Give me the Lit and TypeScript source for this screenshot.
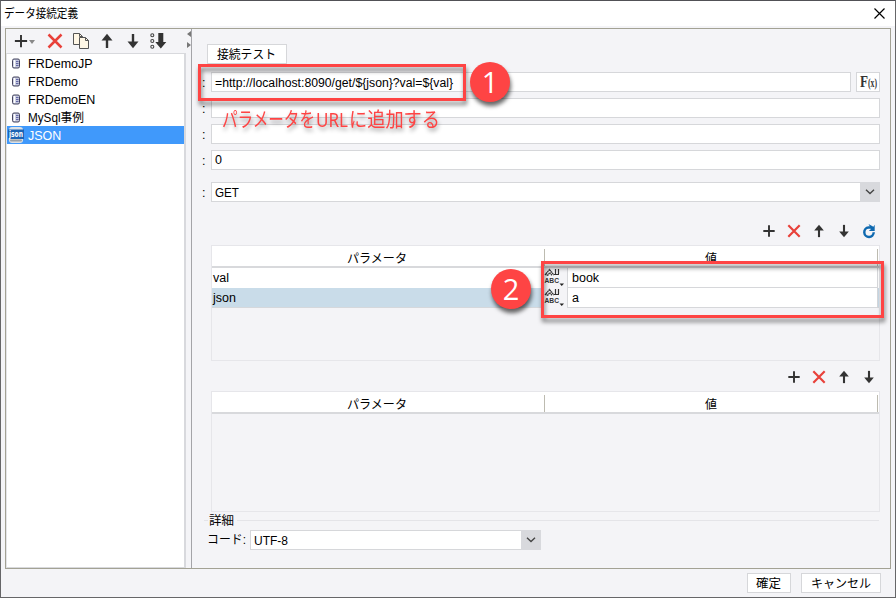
import { LitElement, html, svg, css } from "lit";
import { customElement } from "lit/decorators.js";

// Single-line text set to an exact advance width.
const label = (text: string, width: number, cls = "") => html`
  <svg class="label ${cls}" width=${width} height="18">
    <text x="0" y="13.5" textLength=${width} lengthAdjust="spacingAndGlyphs">${text}</text>
  </svg>`;

const glyphs: Record<string, unknown> = {
  add: svg`<path d="M8 1.500v13M1.500 8h13" stroke="#333" stroke-width="2.200" fill="none"/>`,
  addBig: svg`<path d="M8 1v14M1 8h14" stroke="#333" stroke-width="2.2" fill="none"/>`,
  del: svg`<path d="M1.500 1.500L14.500 14.500M14.500 1.500L1.500 14.500" stroke="#e8413a" stroke-width="2.5" fill="none"/>`,
  up: svg`<path d="M8 15V5" stroke="#333" stroke-width="2.4" fill="none"/><path d="M8 .8L13.500 7.500H2.500Z" fill="#333"/>`,
  down: svg`<path d="M8 1V11" stroke="#333" stroke-width="2.4" fill="none"/><path d="M8 15.200L13.500 8.500H2.500Z" fill="#333"/>`,
  refresh: svg`<path d="M10.500 4H7.500A5.400 5.400 0 1 0 13.400 9.500" stroke="#0f69b0" stroke-width="2.8" fill="none"/><path d="M7.500 0L13 3.200L14.500 .8V8H7.800L10.300 5.600Z" fill="#0f69b0"/>`,
  copy: svg`<g fill="#fff7e6" stroke="#555" stroke-width="1"><path d="M.5 .5H6.5L9.5 3.5V11.5H.5Z"/><path d="M6.500 4.500H12.500L15.500 7.500V15.500H6.500Z"/><path d="M12.500 4.500V7.500H15.500M6.500 .5V3.500H9.500" fill="none"/></g>`,
  sort: svg`<g fill="none" stroke="#444" stroke-width="1.1"><circle cx="2.300" cy="2.300" r="1.500"/><circle cx="2.300" cy="8" r="1.500"/><circle cx="2.300" cy="13.700" r="1.500"/></g><path d="M8.300 0h5v9h3L10.800 15.500L5.300 9h3Z" fill="#333"/>`,
};
const icon = (name: string, size = 16) =>
  html`<svg class="icon" width=${size} height=${size} viewBox="0 0 16 16">${glyphs[name]}</svg>`;

const chevron = html`<span class="chev"><svg width="10" height="6" viewBox="0 0 10 6">
  <path d="M1 .8L5 4.500L9 .8" fill="none" stroke="#444" stroke-width="1.400"/></svg></span>`;

const database = html`<svg class="db" width="10" height="11" viewBox="0 0 10 11">
  <rect x="1.500" y="1" width="7" height="9" rx="1.500" fill="#c3c7dd" stroke="#45455e" stroke-width="1"/>
  <path d="M3.500 2V9" stroke="#fff" stroke-width="1.500"/>
  <path d="M5 3.500H7.500M5 5.500H7.500M5 7.500H7.500" stroke="#5b5fa0" stroke-width=".9"/></svg>`;

const jsonIcon = html`<svg class="json" width="16" height="16" viewBox="0 0 16 16">
  <rect x="1" y="0" width="14" height="16" rx="3" fill="#dde1e5"/>
  <rect x="2" y="12.500" width="12" height="2" rx="1" fill="#9ba1a7"/>
  <rect x="0" y="2.500" width="16" height="9.500" fill="#1d64b5"/>
  <text x="1" y="9.500" textLength="14" lengthAdjust="spacingAndGlyphs">json</text></svg>`;

const typeIcon = html`<svg class="type" width="24" height="20" viewBox="0 0 24 20">
  <path d="M1 7L5.500 1.500L10 7M3.500 7.500L5.800 4.500L8 7.500M1.500 5.500L3.500 7.500" fill="none" stroke="#333" stroke-width="1.300" stroke-dasharray="1.500 .4"/>
  <path d="M11.500 1V6M14.500 1V6M10 6.500H15" fill="none" stroke="#333" stroke-width="1.200"/>
  <text x="0.500" y="15" textLength="14.500" lengthAdjust="spacingAndGlyphs">ABC</text>
  <path d="M15.500 15.500H20L17.750 18Z" fill="#222"/><path d="M23.500 0V20" stroke="#d6d7da"/></svg>`;

@customElement("app-root")
export class AppRoot extends LitElement {
  static styles = css`
    :host { display: block; position: relative; width: 896px; height: 598px; overflow: hidden;
      font: 12.500px/18px "Liberation Sans", "Noto Sans CJK JP", sans-serif; color: #000; }
    * { box-sizing: border-box; }
    svg { display: block; flex: none; overflow: visible; }
    .label text { font: 12.500px "Liberation Sans", "Noto Sans CJK JP", sans-serif; fill: currentColor; }
    .window { height: 598px; border: 1px solid #666668; border-top-color: #515156; background: #f4f4f7; }
    .title { height: 25px; background: #fff; display: flex; justify-content: space-between; padding: 3px 10px 0 3px; }
    .close { margin-top: 4px; }
    .panel { margin: 2px 4px 0; height: 541px; border: 1px solid #a3a294; display: flex; }
    .side { width: 185px; padding: 0 6px 0 0; }
    .bar { height: 24px; display: flex; align-items: center; }
    .side .bar { padding-left: 8px; }
    .tri { margin: 2px 12px 0 1px; }
    .g1, .g2, .g3 { margin-right: 10px; } .g4 { margin-right: 9px; }
    .list { width: 180px; height: 515px; border: solid #d8d9dd; border-width: 1px 2px 1px 1px; border-left-color: #e4e4e8; background: #fff; }
    .item { height: 18px; display: flex; align-items: center; padding-left: 4px; }
    .name { padding-top: 2px; line-height: 18px; }
    .item.sel { background: #4099fb; color: #fff; padding-left: 1px; }
    .db { margin-right: 7px; } .json { margin-right: 4px; }
    .json text { font: bold 8.500px "DejaVu Sans", sans-serif; fill: #fff; }
    .split { width: 1px; background: #a4a4a8; }
    .arrows { width: 4px; padding-top: 2px; margin-left: -4px; }
    .main { flex: 1; padding: 15px 10px 0 12px; }
    .btn { height: 20px; border: 1px solid #d6d7da; background: #fff; display: flex; align-items: center; justify-content: center; }
    .test { width: 80px; margin-left: 3px; padding-right: 2px; }
    .field { display: flex; height: 20px; margin-top: 6px; }
    .field.first { margin-top: 8px; } .field.method { margin-top: 12px; }
    .colon { width: 7px; line-height: 22px; text-indent: -2px; }
    .box { flex: 1; min-width: 0; height: 20px; border: 1px solid #d6d7da; background: #fff; padding-left: 3px; display: flex; align-items: center; justify-content: space-between; line-height: 20px; }
    .fx { width: 24px; margin-left: 5px; }
    .fx text { font: bold 16px "Liberation Serif", serif; fill: #333; }
    .fx .small { font-size: 12px; }
    .chev { width: 20px; height: 20px; background: #d8d9dd; display: flex; align-items: center; justify-content: center; margin-right: -1px; }
    .tools { display: flex; justify-content: flex-end; gap: 11px; padding-right: 4px; }
    .tools.one { margin-top: 22px; } .tools.two { margin-top: 9px; }
    .table { margin: 7px 0 0 7px; border: 1px solid #e6e6ea; }
    .one-t { height: 116px; } .two-t { height: 121px; }
    .head { height: 22px; background: #fff; border-bottom: 2px solid #d8d9dc; display: flex; padding-top: 3px; }
    .th { height: 17px; border-right: 1px solid #bdbbb0; display: flex; justify-content: center; padding-right: 2px; }
    .th.v { padding-right: 0; }
    .k { width: 333px; } .v { flex: 1; margin-right: 1px; }
    .row { display: flex; height: 20px; background: #fff; }
    .row.sel { background: #c9dce9; border-bottom: 1px solid #d5d8dc; }
    .key { width: 332px; line-height: 20px; padding-left: 1px; }
    .type { background: #f4f4f7; }
    .type text { font: bold 8px "Liberation Sans", sans-serif; fill: #333; }
    .cell { flex: 1; height: 20px; border: solid #d6d7da; border-width: 0 1px 1px 0; background: #fff; padding-left: 4px; line-height: 20px; margin-right: 1px; }
    .group { display: flex; height: 18px; align-items: center; margin: -1px 1px 0 0; }
    .ln { height: 1px; background: #e4e4e8; }
    .ln.a { width: 4px; margin-right: 1px; } .ln.b { flex: 1; margin-left: 3px; }
    .code { display: flex; height: 20px; margin: 1px 0 0 3px; }
    .code .box { flex: none; width: 291px; margin-left: 4px; }
    .foot { display: flex; justify-content: flex-end; gap: 10px; padding: 4px 14px 0 0; }
    .ok { width: 44px; padding-right: 1px; } .cancel { width: 80px; padding-right: 1px; }
    .mark { position: absolute; border: 3px solid #fe4444; filter: drop-shadow(1px 4px 2px rgba(0,0,0,.5)); }
    .m1 { left: 198px; top: 64px; width: 268px; height: 37px; }
    .m2 { left: 541px; top: 261px; width: 343px; height: 57px; }
    .dot { position: absolute; width: 40px; height: 40px; border-radius: 50%; background: #fe4444; color: #fff; font: 29px/40px "Open Sans", "Noto Sans", sans-serif; text-align: center; box-shadow: 1px 4px 4px rgba(0,0,0,.6); }
    .d1 { left: 470px; top: 62px; } .d2 { left: 491px; top: 269px; }
    .note { position: absolute; left: 222px; top: 107px; filter: drop-shadow(1px 3px 2px rgba(0,0,0,.4)); }
    .note text { font: 400 20px "Noto Sans", "Noto Sans CJK JP", sans-serif; fill: #fe4444; }
  `;

  private header() {
    return html`<div class="head"><div class="th k">${label("パラメータ", 60)}</div><div class="th v">${label("値", 12)}</div></div>`;
  }

  render() {
    return html`
      <div class="window">
        <div class="title">${label("データ接続定義", 74)}
          <svg class="close" width="11" height="11"><path d="M.5 .5L10.500 10.500M10.500 .5L.5 10.500" stroke="#000" stroke-width="1.200"/></svg>
        </div>
        <div class="panel">
          <div class="side">
            <div class="bar">
              ${icon("addBig", 14)}
              <svg class="tri" width="6" height="4"><path d="M0 0H6L3 4Z" fill="#888"/></svg>
              <span class="g1">${icon("del")}</span><span class="g2">${icon("copy")}</span>
              <span class="g3">${icon("up")}</span><span class="g4">${icon("down")}</span>${icon("sort")}
            </div>
            <div class="list">
              ${["FRDemoJP", "FRDemo", "FRDemoEN"].map((n) => html`<div class="item">${database}<span class="name">${n}</span></div>`)}
              <div class="item">${database}${label("MySql事例", 56)}</div>
              <div class="item sel">${jsonIcon}<span class="name">JSON</span></div>
            </div>
          </div>
          <div class="arrows"><svg width="4" height="16"><path d="M4 0V6L0 3Z M0 11V17L4 14Z" fill="#777"/></svg></div>
          <div class="split"></div>
          <div class="main">
            <div class="btn test">${label("接続テスト", 59)}</div>
            <div class="field first"><span class="colon">:</span>
              <div class="box url">${label("=http://localhost:8090/get/${json}?val=${val}", 238)}</div>
              <div class="btn fx"><svg width="17" height="16"><text x="0" y="13"><tspan textLength="8" lengthAdjust="spacingAndGlyphs">F</tspan><tspan class="small" textLength="9" lengthAdjust="spacingAndGlyphs">(x)</tspan></text></svg></div>
            </div>
            <div class="field"><span class="colon">:</span><div class="box"></div></div>
            <div class="field"><span class="colon">:</span><div class="box"></div></div>
            <div class="field"><span class="colon">:</span><div class="box">0</div></div>
            <div class="field method"><span class="colon">:</span><div class="box">${label("GET", 24)}${chevron}</div></div>
            <div class="tools one">${["add", "del", "up", "down", "refresh"].map((n) => icon(n, 14))}</div>
            <div class="table one-t">${this.header()}
              <div class="row"><span class="key">val</span>${typeIcon}<span class="cell">book</span></div>
              <div class="row sel"><span class="key">json</span>${typeIcon}<span class="cell">a</span></div>
            </div>
            <div class="tools two">${["add", "del", "up", "down"].map((n) => icon(n, 14))}</div>
            <div class="table two-t">${this.header()}</div>
            <div class="group"><span class="ln a"></span>${label("詳細", 25)}<span class="ln b"></span></div>
            <div class="code">${label("コード:", 39)}<div class="box">${label("UTF-8", 34)}${chevron}</div></div>
          </div>
        </div>
        <div class="foot">
          <div class="btn ok">${label("確定", 25)}</div>
          <div class="btn cancel">${label("キャンセル", 60)}</div>
        </div>
      </div>
      <div class="mark m1"></div><div class="dot d1">1</div>
      <svg class="note" width="218" height="26">
        <text x="0" y="20" textLength="93" lengthAdjust="spacingAndGlyphs">パラメータを</text>
        <text x="94" y="20" textLength="32" lengthAdjust="spacingAndGlyphs">URL</text>
        <text x="127" y="20" textLength="91" lengthAdjust="spacingAndGlyphs">に追加する</text>
      </svg>
      <div class="mark m2"></div><div class="dot d2">2</div>
    `;
  }
}
